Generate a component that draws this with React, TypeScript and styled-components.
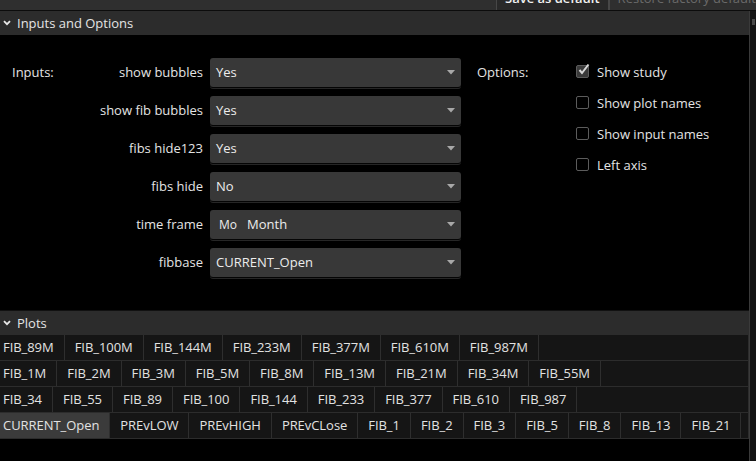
import styled, { createGlobalStyle } from "styled-components"

const GlobalStyle = createGlobalStyle`
    html, body {
        margin: 0;
        padding: 0;
        background: #000;
        font-family: "Open Sans", "DejaVu Sans", sans-serif;
        font-size: 13px;
        color: #e6e6e6;
    }
`

const Page = styled.div`
    width: 756px;
    height: 461px;
    overflow: hidden;
    background: #000;
`

const TopBar = styled.div`
    height: 10px;
    display: flex;
    align-items: flex-end;
    overflow: hidden;
    background: #2f2f2f;
    border-bottom: 1px solid #0c0c0c;
    padding-left: 496px;
`

const TopButton = styled.div<{ $dim?: boolean }>`
    height: 24px;
    line-height: 24px;
    padding: 0 8px;
    white-space: nowrap;
    font-weight: ${p => (p.$dim ? 400 : 600)};
    color: ${p => (p.$dim ? "#6a6a6a" : "#f2f2f2")};
    background: ${p => (p.$dim ? "transparent" : "#292929")};
    border-left: 1px solid #474747;
    border-right: ${p => (p.$dim ? "none" : "1px solid #474747")};
`

const Body = styled.div`
    display: flex;
`

const Main = styled.div`
    width: 749px;
`

const Gutter = styled.div`
    width: 6px;
    height: 450px;
    background: #141414;
    border-left: 1px solid #3a3a3a;
    display: flex;
    flex-direction: column;
    padding-top: 8px;
    align-items: center;
`

const GutterThumb = styled.div`
    width: 3px;
    height: 6px;
    background: #4a4a4a;
`

const SectionHeader = styled.div<{ $first?: boolean }>`
    height: 24px;
    display: flex;
    align-items: center;
    gap: 6px;
    padding-left: 3px;
    background: #2c2c2c;
    border-top: ${p => (p.$first ? "none" : "1px solid #111")};
    color: #e4e4e4;
`

const Content = styled.div`
    height: 275px;
    display: flex;
    align-items: flex-start;
    padding: 23px 0 0 12px;
    box-sizing: border-box;
`

const SideLabel = styled.div<{ $width: number; $gap?: number }>`
    width: ${p => p.$width}px;
    margin-left: ${p => p.$gap || 0}px;
    line-height: 28px;
    color: #e4e4e4;
`

const FieldGrid = styled.div`
    display: grid;
    grid-template-columns: 105px 251px;
    column-gap: 7px;
    row-gap: 9px;
`

const FieldLabel = styled.div`
    text-align: right;
    line-height: 28px;
    white-space: nowrap;
    color: #e4e4e4;
`

const Select = styled.div`
    height: 29px;
    display: flex;
    align-items: center;
    justify-content: space-between;
    padding: 0 6px 1px 6px;
    box-sizing: border-box;
    background: #383838;
    border-radius: 3px;
    box-shadow: 0 1px 0 #050505, 0 2px 0 #262626;
    color: #ececec;
`

const SelectValue = styled.span`
    display: flex;
    align-items: center;
`

const Tag = styled.span`
    font-size: 12px;
    margin: 0 10px 0 3px;
`

const OptionList = styled.div`
    display: flex;
    flex-direction: column;
    margin-top: -2px;
`

const OptionRow = styled.div`
    height: 31px;
    display: flex;
    align-items: center;
    gap: 8px;
    color: #e4e4e4;
`

const Box = styled.span<{ $checked?: boolean }>`
    width: 11px;
    height: 11px;
    border: 1px solid #5c5c5c;
    border-radius: 2px;
    background: ${p => (p.$checked ? "#3a3a3a" : "transparent")};
    position: relative;
`

const Check = styled.svg`
    position: absolute;
    left: 0px;
    top: -3px;
`

const PlotRow = styled.div`
    height: 25px;
    display: flex;
    background: #151515;
    border-bottom: 1px solid #2c2c2c;
    border-right: 1px solid #2c2c2c;
`

const PlotCell = styled.div<{ $selected?: boolean }>`
    line-height: 25px;
    padding: 0 10px;
    letter-spacing: -0.05px;
    white-space: nowrap;
    border-right: 1px solid #2e2e2e;
    background: ${p => (p.$selected ? "#3b3b3b" : "transparent")};
    color: #e2e2e2;
    &:first-child {
        padding-left: 3px;
    }
`

function Chevron() {
    return (
        <svg width="8" height="6" viewBox="0 0 8 6">
            <path d="M1 1.2 L4 4.2 L7 1.2" fill="none" stroke="#e8e8e8" strokeWidth="1.8" />
        </svg>
    )
}

function Arrow() {
    return (
        <svg width="8" height="5" viewBox="0 0 8 5">
            <path d="M0 0 H8 L4 4.5 Z" fill="#a8a8a8" />
        </svg>
    )
}

const inputs = [
    { label: "show bubbles", value: "Yes" },
    { label: "show fib bubbles", value: "Yes" },
    { label: "fibs hide123", value: "Yes" },
    { label: "fibs hide", value: "No" },
    { label: "time frame", value: "Month", tag: "Mo" },
    { label: "fibbase", value: "CURRENT_Open" },
]

const options = [
    { label: "Show study", checked: true },
    { label: "Show plot names" },
    { label: "Show input names" },
    { label: "Left axis" },
]

const plots = [
    ["FIB_89M", "FIB_100M", "FIB_144M", "FIB_233M", "FIB_377M", "FIB_610M", "FIB_987M"],
    ["FIB_1M", "FIB_2M", "FIB_3M", "FIB_5M", "FIB_8M", "FIB_13M", "FIB_21M", "FIB_34M", "FIB_55M"],
    ["FIB_34", "FIB_55", "FIB_89", "FIB_100", "FIB_144", "FIB_233", "FIB_377", "FIB_610", "FIB_987"],
    ["CURRENT_Open", "PREvLOW", "PREvHIGH", "PREvCLose", "FIB_1", "FIB_2", "FIB_3", "FIB_5", "FIB_8", "FIB_13", "FIB_21"],
]

export default function App(): JSX.Element {
    return (
        <>
            <GlobalStyle />
            <Page>
                <TopBar>
                    <TopButton>Save as default</TopButton>
                    <TopButton $dim>Restore factory defaults</TopButton>
                </TopBar>
                <Body>
                    <Main>
                        <SectionHeader $first>
                            <Chevron />
                            Inputs and Options
                        </SectionHeader>
                        <Content>
                            <SideLabel $width={86}>Inputs:</SideLabel>
                            <FieldGrid>
                                {inputs.map(item => (
                                    <>
                                        <FieldLabel key={item.label + "-l"}>{item.label}</FieldLabel>
                                        <Select key={item.label + "-s"}>
                                            <SelectValue>
                                                {item.tag && <Tag>{item.tag}</Tag>}
                                                {item.value}
                                            </SelectValue>
                                            <Arrow />
                                        </Select>
                                    </>
                                ))}
                            </FieldGrid>
                            <SideLabel $width={99} $gap={16}>Options:</SideLabel>
                            <OptionList>
                                {options.map(opt => (
                                    <OptionRow key={opt.label}>
                                        <Box $checked={opt.checked}>
                                            {opt.checked && (
                                                <Check width="13" height="13" viewBox="0 0 13 13">
                                                    <path d="M2.5 7 L5 10 L11.5 1.5" fill="none" stroke="#d8d8d8" strokeWidth="2" />
                                                </Check>
                                            )}
                                        </Box>
                                        {opt.label}
                                    </OptionRow>
                                ))}
                            </OptionList>
                        </Content>
                        <SectionHeader>
                            <Chevron />
                            Plots
                        </SectionHeader>
                        {plots.map((row, i) => (
                            <PlotRow key={i}>
                                {row.map(name => (
                                    <PlotCell key={name} $selected={name === "CURRENT_Open"}>{name}</PlotCell>
                                ))}
                            </PlotRow>
                        ))}
                    </Main>
                    <Gutter>
                        <GutterThumb />
                    </Gutter>
                </Body>
            </Page>
        </>
    )
}
